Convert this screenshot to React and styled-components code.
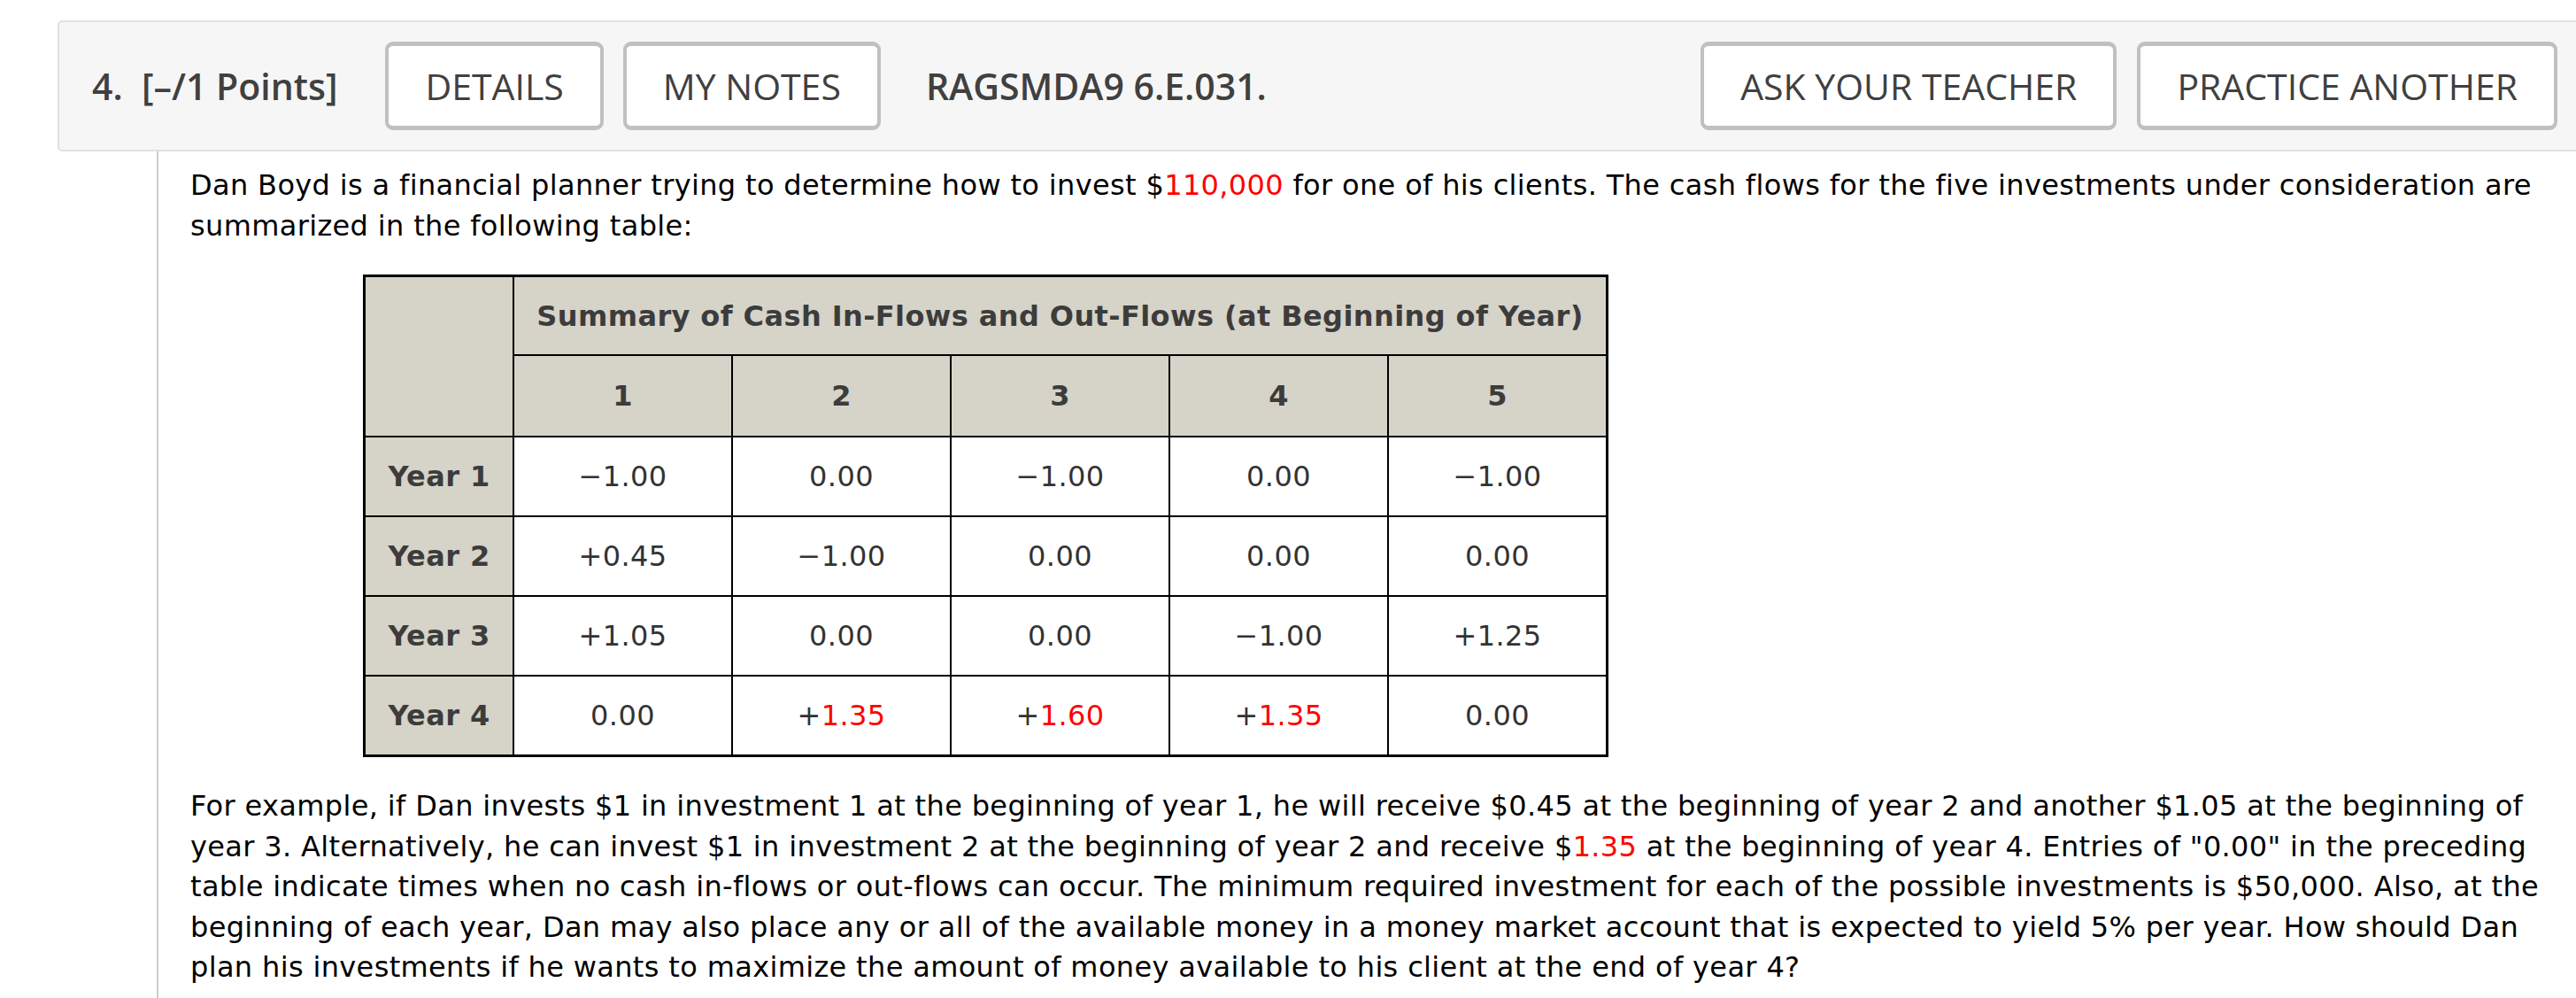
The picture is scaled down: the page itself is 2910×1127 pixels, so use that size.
import React from "react";
import styled, { createGlobalStyle } from "styled-components";

const GlobalStyle = createGlobalStyle`
  html, body {
    margin: 0;
    padding: 0;
    background: #ffffff;
    overflow-x: hidden;
  }
`;

const Page = styled.div`
  padding: 23px 25px 0 65px;
  min-height: 1127px;
  box-sizing: border-box;
`;

const QuestionHeader = styled.header`
  display: flex;
  align-items: center;
  height: 148px;
  box-sizing: border-box;
  margin-right: -40px;
  padding: 0 34px 0 37px;
  background: #f6f6f6;
  border: 2px solid #e0e0e0;
  border-radius: 5px;
  font-family: "Open Sans", "Liberation Sans", sans-serif;
  color: #404040;
`;

const Label = styled.span`
  font-size: 41px;
  font-weight: 600;
  white-space: pre;
  margin-right: ${(p) => p.$gap || 0}px;
`;

const Spacer = styled.div`
  flex: 1;
`;

const HeadButton = styled.button`
  height: 100px;
  padding: 0 41px;
  margin-right: ${(p) => p.$gap || 0}px;
  background: #ffffff;
  border: 4px solid #c0c0c0;
  border-top-width: 5px;
  border-bottom-width: 5px;
  border-radius: 9px;
  font-family: "Open Sans", "Liberation Sans", sans-serif;
  font-size: 41px;
  font-weight: 400;
  color: #404040;
  cursor: pointer;
`;

const Body = styled.div`
  margin-left: 112px;
  border-left: 2px solid #cccccc;
  padding: 16px 0 40px 36px;
  min-height: 954px;
  box-sizing: border-box;
  font-family: "DejaVu Sans", Verdana, sans-serif;
  font-size: 32px;
  letter-spacing: 0.35px;
  line-height: 45.5px;
  color: #000000;
`;

const Para = styled.p`
  margin: 0;
`;

const Red = styled.span`
  color: #ff0000;
`;

const Table = styled.table`
  margin: 32px 0 33px 195px;
  border-collapse: collapse;
  border: 3px solid #000000;
  font-family: "DejaVu Sans", Verdana, sans-serif;
  font-size: 32px;
  letter-spacing: 0.4px;
  line-height: 1;
`;

const Th = styled.th`
  background: #d6d3c8;
  color: #3c3c3c;
  font-weight: 700;
  border: 2px solid #000000;
  height: ${(p) => p.$h || 88}px;
  width: ${(p) => p.$w || 245}px;
  padding: 0;
  text-align: center;
`;

const Td = styled.td`
  background: #ffffff;
  color: #333333;
  border: 2px solid #000000;
  height: 88px;
  padding: 0;
  text-align: center;
`;

const cols = ["1", "2", "3", "4", "5"];

const rows = [
  ["Year 1", ["−1.00", "0.00", "−1.00", "0.00", "−1.00"]],
  ["Year 2", ["+0.45", "−1.00", "0.00", "0.00", "0.00"]],
  ["Year 3", ["+1.05", "0.00", "0.00", "−1.00", "+1.25"]],
  ["Year 4", ["0.00", "+|1.35", "+|1.60", "+|1.35", "0.00"]],
];

const Cell = ({ value }) => {
  if (value.includes("|")) {
    const [sign, num] = value.split("|");
    return (
      <Td>
        {sign}
        <Red>{num}</Red>
      </Td>
    );
  }
  return <Td>{value}</Td>;
};

export default function App() {
  return (
    <>
      <GlobalStyle />
      <Page>
        <QuestionHeader>
          <Label $gap={54}>4.  [–/1 Points]</Label>
          <HeadButton $gap={22}>DETAILS</HeadButton>
          <HeadButton $gap={51}>MY NOTES</HeadButton>
          <Label>RAGSMDA9 6.E.031.</Label>
          <Spacer />
          <HeadButton $gap={23}>ASK YOUR TEACHER</HeadButton>
          <HeadButton>PRACTICE ANOTHER</HeadButton>
        </QuestionHeader>
        <Body>
          <Para>
            Dan Boyd is a financial planner trying to determine how to invest $
            <Red>110,000</Red> for one of his clients. The cash flows for the five
            investments under consideration are summarized in the following table:
          </Para>
          <Table>
            <thead>
              <tr>
                <Th rowSpan={2} $w={166} />
                <Th colSpan={5} $h={87}>
                  Summary of Cash In-Flows and Out-Flows (at Beginning of Year)
                </Th>
              </tr>
              <tr>
                {cols.map((c) => (
                  <Th key={c} $h={90}>
                    {c}
                  </Th>
                ))}
              </tr>
            </thead>
            <tbody>
              {rows.map(([year, values]) => (
                <tr key={year}>
                  <Th $w={166}>{year}</Th>
                  {values.map((v, i) => (
                    <Cell key={i} value={v} />
                  ))}
                </tr>
              ))}
            </tbody>
          </Table>
          <Para>
            For example, if Dan invests $1 in investment 1 at the beginning of year 1,
            he will receive $0.45 at the beginning of year 2 and another $1.05 at the
            beginning of year 3. Alternatively, he can invest $1 in investment 2 at the
            beginning of year 2 and receive $<Red>1.35</Red> at the beginning of year 4.
            Entries of "0.00" in the preceding table indicate times when no cash
            in-flows or out-flows can occur. The minimum required investment for each
            of the possible investments is $50,000. Also, at the beginning of each year,
            Dan may also place any or all of the available money in a money market
            account that is expected to yield 5% per year. How should Dan plan his
            investments if he wants to maximize the amount of money available to his
            client at the end of year 4?
          </Para>
        </Body>
      </Page>
    </>
  );
}
